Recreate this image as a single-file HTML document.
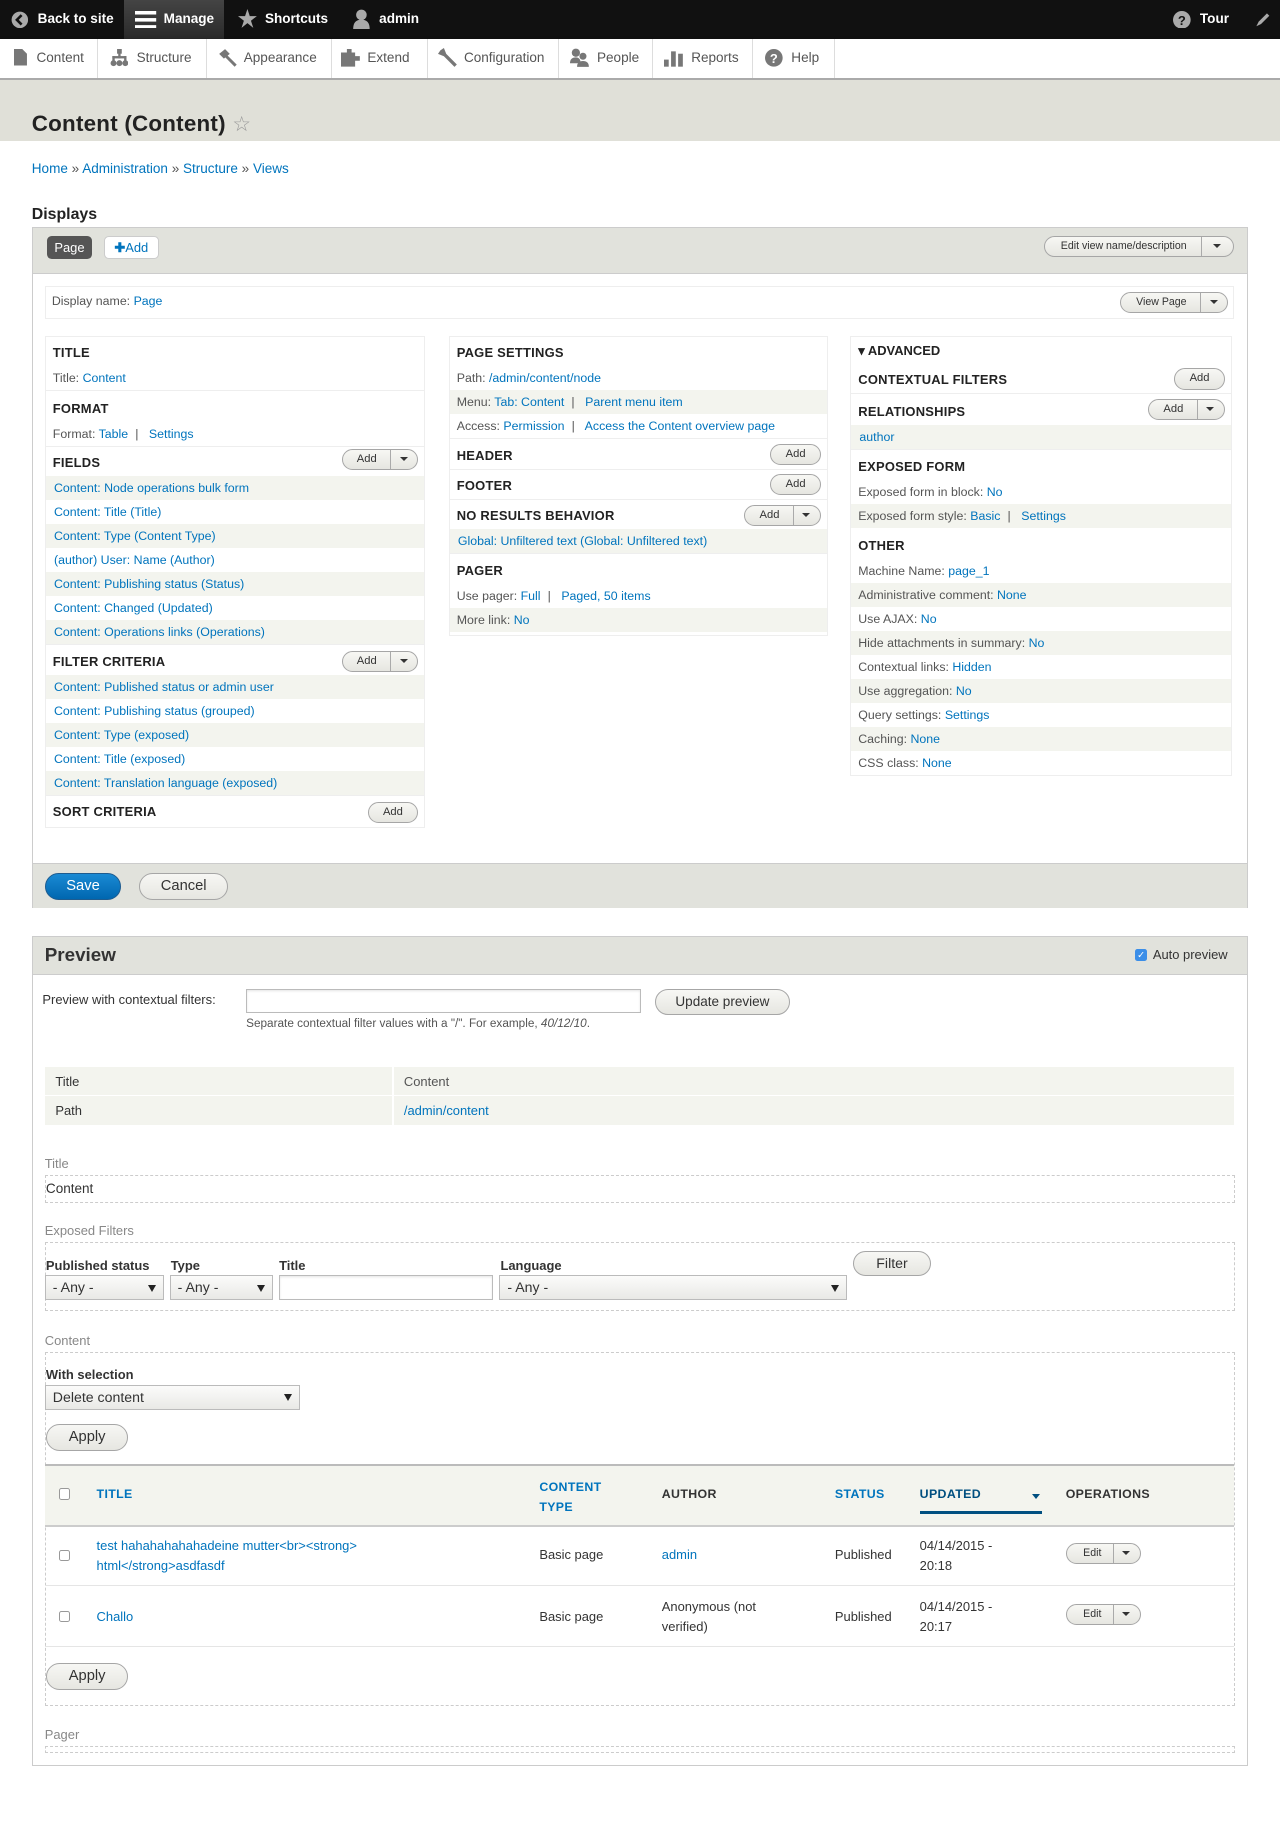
<!DOCTYPE html>
<html><head><meta charset="utf-8">
<style>
html,body{margin:0;padding:0;background:#fff;overflow:hidden}
body{width:1280px;height:1846px}
#w{zoom:1.17756;width:1087px;height:1568px;position:relative;font-family:"Liberation Sans",Arial,sans-serif;font-size:11px;color:#333}
.a{position:absolute}
a,.l{color:#0074bd;text-decoration:none}
.tb{left:0;top:0;width:1087px;height:33px;background:#111}
.tb span{position:absolute;top:0;line-height:32px;color:#fff;font-weight:bold;font-size:11.5px}
.tray{left:0;top:33px;width:1087px;height:33px;background:#fff;border-bottom:2px solid #aaa;box-shadow:0 1px 3px rgba(0,0,0,.3)}
.tray div{position:absolute;top:0;height:33px;line-height:32px;border-right:1px solid #ddd;color:#555;font-size:11.5px}
.btn{position:absolute;border:1px solid #a6a6a6;border-radius:12px;background:linear-gradient(#f7f7f4,#e6e6e1);color:#333;font-size:9.5px;text-align:center;box-sizing:border-box}
.col{position:absolute;border:1px solid #eee;background:#fff;box-sizing:border-box}
.sec{border-bottom:1px solid #eee;padding-top:3px;position:relative}
.sec:last-child{border-bottom:0}
.h{height:22px;line-height:22px;padding-left:6px;font-weight:bold;font-size:11px;color:#222;letter-spacing:.2px}
.r{height:20.4px;line-height:20.4px;padding-left:6px;color:#555;font-size:10.5px;white-space:nowrap}
.g{background:#f3f4ee}
.r.i{padding-left:7px}
.sep{color:#555;margin:0 6px}
.dash{position:absolute;border:1px dashed #ccc;border-right-style:dashed}
.sel{position:absolute;border:1px solid #bbb;background:linear-gradient(#fbfbfa,#e9e9e6);box-sizing:border-box;font-size:12px;line-height:19px;padding-left:6px;color:#333}
.sel:after{content:"";position:absolute;right:6px;top:7px;border:4px solid transparent;border-top:6px solid #222}
.inp{position:absolute;border:1px solid #bbb;background:#fff;box-sizing:border-box;box-shadow:inset 0 1px 2px rgba(0,0,0,.1)}
.cb{position:absolute;width:8px;height:8px;border:1px solid #999;border-radius:2px;background:#fff}
.th{position:absolute;font-weight:bold;font-size:10.5px;letter-spacing:.3px}
.dd{position:absolute;top:0;right:0;height:100%;border-left:1px solid #aaa}
.dd:after{content:"";position:absolute;left:50%;top:50%;margin:-2px 0 0 -4px;border:4px solid transparent;border-top:4px solid #333}
</style></head><body><div id="w">

<div class="a tb">
  <div class="a" style="left:105px;top:0;width:85px;height:33px;background:linear-gradient(#444,#2a2a2a)"></div>
  <svg class="a" style="left:9px;top:9px" width="15" height="15"><circle cx="7.5" cy="7.5" r="7" fill="#aaa"/><path d="M9 3.5 L5 7.5 L9 11.5" stroke="#111" stroke-width="2.2" fill="none"/></svg>
  <span style="left:32px">Back to site</span>
  <svg class="a" style="left:115px;top:9px" width="18" height="15"><rect y="0" width="18" height="3" fill="#fff"/><rect y="6" width="18" height="3" fill="#fff"/><rect y="12" width="18" height="3" fill="#fff"/></svg>
  <span style="left:139px">Manage</span>
  <svg class="a" style="left:202px;top:8px" width="16" height="16"><path d="M8 0 L10 6 L16 6 L11 10 L13 16 L8 12 L3 16 L5 10 L0 6 L6 6Z" fill="#aaa"/></svg>
  <span style="left:225px">Shortcuts</span>
  <svg class="a" style="left:299px;top:8px" width="16" height="17"><circle cx="8" cy="5" r="4.5" fill="#aaa"/><path d="M1 17 Q1 9 8 9 Q15 9 15 17Z" fill="#aaa"/></svg>
  <span style="left:322px">admin</span>
  <svg class="a" style="left:996px;top:9px" width="15" height="15"><circle cx="7.5" cy="7.5" r="7.5" fill="#aaa"/><text x="7.5" y="12" text-anchor="middle" font-size="11" font-weight="bold" fill="#111" font-family="Liberation Sans">?</text></svg>
  <span style="left:1019px">Tour</span>
  <svg class="a" style="left:1065px;top:9px" width="15" height="15"><path d="M2 13 L4 9 L11 2 L13 4 L6 11Z" fill="#aaa"/></svg>
</div>

<div class="a tray">
  <div style="left:0;width:82px"><svg class="a" style="left:12px;top:9px" width="11" height="14"><path d="M0 0 H7 L11 4 V14 H0Z" fill="#777"/></svg><span style="position:absolute;left:31px">Content</span></div>
  <div style="left:83px;width:92px"><svg class="a" style="left:10px;top:9px" width="16" height="15"><rect x="6" y="0" width="4" height="4" fill="#777"/><rect x="7" y="3" width="2" height="5" fill="#777"/><rect x="2" y="6" width="12" height="2" fill="#777"/><rect x="2" y="6" width="2" height="5" fill="#777"/><rect x="12" y="6" width="2" height="5" fill="#777"/><circle cx="3" cy="12" r="2.5" fill="#777"/><circle cx="8" cy="12" r="2.5" fill="#777"/><circle cx="13" cy="12" r="2.5" fill="#777"/></svg><span style="position:absolute;left:33px">Structure</span></div>
  <div style="left:176px;width:105px"><svg class="a" style="left:9px;top:8px" width="16" height="16"><path d="M1 5 L6 1 L10 5 L5 9Z" fill="#777"/><path d="M7 7 L15 15" stroke="#777" stroke-width="2.5"/></svg><span style="position:absolute;left:31px">Appearance</span></div>
  <div style="left:282px;width:81px"><svg class="a" style="left:8px;top:9px" width="17" height="15"><path d="M0 3 H5 V0 H9 V3 H12 V6 H16 V10 H12 V15 H0Z" fill="#777"/></svg><span style="position:absolute;left:30px">Extend</span></div>
  <div style="left:364px;width:110px"><svg class="a" style="left:8px;top:8px" width="16" height="17"><path d="M2 2 L5 0 L7 5 L16 14 L14 16 L5 7 L0 5Z" fill="#777"/></svg><span style="position:absolute;left:30px">Configuration</span></div>
  <div style="left:475px;width:79px"><svg class="a" style="left:9px;top:8px" width="16" height="16"><circle cx="5" cy="4" r="3.5" fill="#777"/><path d="M0 13 Q0 8 5 8 Q9 8 9 13Z" fill="#777"/><circle cx="11" cy="7" r="3" fill="#777"/><path d="M6 16 Q6 11 11 11 Q16 11 16 16Z" fill="#777"/></svg><span style="position:absolute;left:32px">People</span></div>
  <div style="left:555px;width:84px"><svg class="a" style="left:9px;top:9px" width="17" height="15"><rect x="0" y="9" width="4" height="6" fill="#777"/><rect x="6" y="2" width="4" height="13" fill="#777"/><rect x="12" y="4" width="4" height="11" fill="#777"/></svg><span style="position:absolute;left:32px">Reports</span></div>
  <div style="left:640px;width:68px"><svg class="a" style="left:10px;top:9px" width="15" height="15"><circle cx="7.5" cy="7.5" r="7.5" fill="#777"/><text x="7.5" y="12" text-anchor="middle" font-size="11" font-weight="bold" fill="#fff" font-family="Liberation Sans">?</text></svg><span style="position:absolute;left:32px">Help</span></div>
</div>

<div class="a" style="left:0;top:68px;width:1087px;height:52px;background:#e0e0d8"></div>
<div class="a" style="left:27px;top:94px;font-size:19px;font-weight:bold;color:#222;letter-spacing:.2px">Content (Content) <span style="font-weight:normal;color:#999;font-size:18px">☆</span></div>
<div class="a" style="left:27px;top:137px;font-size:11.5px;color:#555"><a>Home</a> » <a>Administration</a> » <a>Structure</a> » <a>Views</a></div>
<div class="a" style="left:27px;top:175px;font-size:13.5px;font-weight:bold;color:#222">Displays</div>

<div class="a" style="left:27px;top:193px;width:1033px;height:578px;border:1px solid #ccc;box-sizing:border-box;background:#fff"></div>
<div class="a" style="left:28px;top:194px;width:1031px;height:38px;background:#e1e2dc;border-bottom:1px solid #ccc"></div>
<div class="a" style="left:40px;top:200px;width:38px;height:20px;background:#555;border-radius:4px;color:#fff;font-size:11px;line-height:20px;text-align:center">Page</div>
<div class="a" style="left:88px;top:200px;width:47px;height:20px;background:#fff;border:1px solid #ccc;border-radius:4px;box-sizing:border-box;color:#0074bd;font-size:11px;line-height:18px;text-align:center"><b>✚</b>Add</div>
<div class="btn" style="left:887px;top:200px;width:161px;height:18px;line-height:16px;text-align:left;padding-left:13px;font-size:9px">Edit view name/description<div class="dd" style="width:26px"></div></div>

<div class="a" style="left:38px;top:243px;width:1010px;height:28px;border:1px solid #eee;box-sizing:border-box"></div>
<div class="a" style="left:44px;top:250px;font-size:10.5px;color:#555">Display name: <a>Page</a></div>
<div class="btn" style="left:951px;top:248px;width:92px;height:18px;line-height:16px;text-align:left;padding-left:13px;font-size:9px">View Page<div class="dd" style="width:22px"></div></div>

<div class="col" style="left:38px;top:285px;width:323px;height:418px">
 <div class="sec"><div class="h">TITLE</div><div class="r">Title: <a>Content</a></div></div>
 <div class="sec" style="padding-top:4px"><div class="h">FORMAT</div><div class="r">Format: <a>Table</a><span class="sep">|</span> <a>Settings</a></div></div>
 <div class="sec" style="padding-top:3px"><div class="h">FIELDS</div><div class="btn" style="right:5px;width:65px;height:18px;line-height:16px;position:absolute;top:2px;text-align:left;padding-left:12px">Add<div class="dd" style="width:22px"></div></div>
  <div class="r i g"><a>Content: Node operations bulk form</a></div><div class="r i"><a>Content: Title (Title)</a></div><div class="r i g"><a>Content: Type (Content Type)</a></div><div class="r i"><a>(author) User: Name (Author)</a></div><div class="r i g"><a>Content: Publishing status (Status)</a></div><div class="r i"><a>Content: Changed (Updated)</a></div><div class="r i g"><a>Content: Operations links (Operations)</a></div></div>
 <div class="sec" style="padding-top:3px"><div class="h">FILTER CRITERIA</div><div class="btn" style="right:5px;top:5px;width:65px;height:18px;line-height:16px;position:absolute;text-align:left;padding-left:12px">Add<div class="dd" style="width:22px"></div></div>
  <div class="r i g"><a>Content: Published status or admin user</a></div><div class="r i"><a>Content: Publishing status (grouped)</a></div><div class="r i g"><a>Content: Type (exposed)</a></div><div class="r i"><a>Content: Title (exposed)</a></div><div class="r i g"><a>Content: Translation language (exposed)</a></div></div>
 <div class="sec" style="padding-top:3px"><div class="h">SORT CRITERIA</div><div class="btn" style="right:5px;top:5px;width:43px;height:18px;line-height:16px;position:absolute">Add</div></div>
</div>

<div class="col" style="left:381px;top:285px;width:322px;height:255px">
 <div class="sec"><div class="h">PAGE SETTINGS</div><div class="r">Path: <a>/admin/content/node</a></div><div class="r g">Menu: <a>Tab: Content</a><span class="sep">|</span> <a>Parent menu item</a></div><div class="r">Access: <a>Permission</a><span class="sep">|</span> <a>Access the Content overview page</a></div></div>
 <div class="sec"><div class="h">HEADER</div><div class="btn" style="right:5px;top:4px;width:43px;height:18px;line-height:16px;position:absolute">Add</div></div>
 <div class="sec"><div class="h">FOOTER</div><div class="btn" style="right:5px;top:4px;width:43px;height:18px;line-height:16px;position:absolute">Add</div></div>
 <div class="sec"><div class="h">NO RESULTS BEHAVIOR</div><div class="btn" style="right:5px;top:4px;width:65px;height:18px;line-height:16px;position:absolute;text-align:left;padding-left:12px">Add<div class="dd" style="width:22px"></div></div><div class="r i g"><a>Global: Unfiltered text (Global: Unfiltered text)</a></div></div>
 <div class="sec"><div class="h">PAGER</div><div class="r">Use pager: <a>Full</a><span class="sep">|</span> <a>Paged, 50 items</a></div><div class="r g">More link: <a>No</a></div></div>
</div>

<div class="col" style="left:722px;top:285px;width:324px;height:374px">
 <div style="height:25px;line-height:24px;padding-left:6px;font-weight:bold;font-size:11px;color:#222">▾ ADVANCED</div>
 <div class="sec" style="padding-top:1px"><div class="h">CONTEXTUAL FILTERS</div><div class="btn" style="right:5px;top:2px;width:43px;height:18px;line-height:16px;position:absolute">Add</div></div>
 <div class="sec" style="padding-top:4px"><div class="h">RELATIONSHIPS</div><div class="btn" style="right:5px;top:4px;width:65px;height:18px;line-height:16px;position:absolute;text-align:left;padding-left:12px">Add<div class="dd" style="width:22px"></div></div><div class="r i g"><a>author</a></div></div>
 <div class="sec" style="border-bottom:0;padding-top:4px"><div class="h">EXPOSED FORM</div><div class="r">Exposed form in block: <a>No</a></div><div class="r g">Exposed form style: <a>Basic</a><span class="sep">|</span> <a>Settings</a></div></div>
 <div class="sec" style="padding-top:4px"><div class="h">OTHER</div><div class="r">Machine Name: <a>page_1</a></div><div class="r g">Administrative comment: <a>None</a></div><div class="r">Use AJAX: <a>No</a></div><div class="r g">Hide attachments in summary: <a>No</a></div><div class="r">Contextual links: <a>Hidden</a></div><div class="r g">Use aggregation: <a>No</a></div><div class="r">Query settings: <a>Settings</a></div><div class="r g">Caching: <a>None</a></div><div class="r">CSS class: <a>None</a></div></div>
</div>

<div class="a" style="left:28px;top:733px;width:1031px;height:37px;background:#e1e2dc;border-top:1px solid #ccc"></div>
<div class="a" style="left:38px;top:741px;width:65px;height:23px;background:linear-gradient(#1a8ad4,#0067b0);border:1px solid #1e5c90;border-radius:12px;box-sizing:border-box;color:#fff;font-size:12.5px;line-height:21px;text-align:center">Save</div>
<div class="btn" style="left:118px;top:741px;width:76px;height:23px;line-height:21px;font-size:12.5px">Cancel</div>

<div class="a" style="left:27px;top:795px;width:1033px;height:705px;border:1px solid #ccc;box-sizing:border-box"></div>
<div class="a" style="left:28px;top:796px;width:1031px;height:31px;background:#e1e2dc;border-bottom:1px solid #ccc"></div>
<div class="a" style="left:38px;top:802px;font-size:16px;font-weight:bold;color:#333">Preview</div>
<div class="a" style="left:964px;top:806px;width:10px;height:10px;background:#3b8ee8;border-radius:2px;color:#fff;font-size:8px;line-height:10px;text-align:center">✓</div>
<div class="a" style="left:979px;top:804px;font-size:11px;color:#333">Auto preview</div>

<div class="a" style="left:36px;top:842px;font-size:11px;color:#333">Preview with contextual filters:</div>
<div class="inp" style="left:209px;top:840px;width:335px;height:20px"></div>
<div class="btn" style="left:556px;top:840px;width:115px;height:22px;line-height:20px;font-size:11.5px">Update preview</div>
<div class="a" style="left:209px;top:864px;font-size:10px;color:#555">Separate contextual filter values with a "/". For example, <i>40/12/10</i>.</div>

<div class="a" style="left:38px;top:906px;width:1010px;height:24px;background:#f3f4ee"></div>
<div class="a" style="left:38px;top:931px;width:1010px;height:24px;background:#f3f4ee"></div>
<div class="a" style="left:333px;top:906px;width:2px;height:49px;background:#fff"></div>
<div class="a" style="left:47px;top:912px;font-size:11px;color:#333">Title</div>
<div class="a" style="left:343px;top:912px;font-size:11px;color:#555">Content</div>
<div class="a" style="left:47px;top:937px;font-size:11px;color:#333">Path</div>
<div class="a" style="left:343px;top:937px;font-size:11px"><a>/admin/content</a></div>

<div class="a" style="left:38px;top:982px;font-size:11px;color:#888">Title</div>
<div class="dash" style="left:38px;top:998px;width:1009px;height:22px"></div>
<div class="a" style="left:39px;top:1003px;font-size:11.5px;color:#333">Content</div>

<div class="a" style="left:38px;top:1039px;font-size:11px;color:#888">Exposed Filters</div>
<div class="dash" style="left:38px;top:1055px;width:1009px;height:57px"></div>
<div class="a" style="left:39px;top:1068px;font-size:11px;font-weight:bold;color:#333">Published status</div>
<div class="a" style="left:145px;top:1068px;font-size:11px;font-weight:bold;color:#333">Type</div>
<div class="a" style="left:237px;top:1068px;font-size:11px;font-weight:bold;color:#333">Title</div>
<div class="a" style="left:425px;top:1068px;font-size:11px;font-weight:bold;color:#333">Language</div>
<div class="sel" style="left:38px;top:1083px;width:101px;height:21px">- Any -</div>
<div class="sel" style="left:144px;top:1083px;width:88px;height:21px">- Any -</div>
<div class="inp" style="left:237px;top:1083px;width:182px;height:21px"></div>
<div class="sel" style="left:424px;top:1083px;width:295px;height:21px">- Any -</div>
<div class="btn" style="left:724px;top:1062px;width:67px;height:22px;line-height:20px;font-size:12px">Filter</div>

<div class="a" style="left:38px;top:1132px;font-size:11px;color:#888">Content</div>
<div class="dash" style="left:38px;top:1148px;width:1009px;height:299px"></div>
<div class="a" style="left:39px;top:1161px;font-size:11px;font-weight:bold;color:#333">With selection</div>
<div class="sel" style="left:38px;top:1176px;width:217px;height:21px">Delete content</div>
<div class="btn" style="left:39px;top:1209px;width:70px;height:23px;line-height:21px;font-size:12.5px">Apply</div>

<div class="a" style="left:38px;top:1243px;width:1010px;height:50px;background:#f3f4ee;border-top:2px solid #bbb;border-bottom:2px solid #ccc"></div>
<div class="cb" style="left:50px;top:1264px"></div>
<div class="th l" style="left:82px;top:1263px">TITLE</div>
<div class="th l" style="left:458px;top:1254px;line-height:17px">CONTENT<br>TYPE</div>
<div class="th" style="left:562px;top:1263px;color:#333">AUTHOR</div>
<div class="th l" style="left:709px;top:1263px">STATUS</div>
<div class="th" style="left:781px;top:1263px;color:#004f80">UPDATED</div>
<div class="a" style="left:781px;top:1283px;width:104px;height:3px;background:#004f80"></div>
<div class="a" style="left:876px;top:1269px;border:4px solid transparent;border-top:5px solid #004f80"></div>
<div class="th" style="left:905px;top:1263px;color:#333">OPERATIONS</div>

<div class="a" style="left:38px;top:1346px;width:1010px;height:1px;background:#e5e5e5"></div>
<div class="a" style="left:38px;top:1398px;width:1010px;height:1px;background:#e5e5e5"></div>
<div class="cb" style="left:50px;top:1316px"></div>
<div class="a" style="left:82px;top:1304px;font-size:11px;line-height:17px"><a>test hahahahahahadeine mutter&lt;br&gt;&lt;strong&gt;<br>html&lt;/strong&gt;asdfasdf</a></div>
<div class="a" style="left:458px;top:1314px;font-size:11px;color:#333">Basic page</div>
<div class="a" style="left:562px;top:1314px;font-size:11px"><a>admin</a></div>
<div class="a" style="left:709px;top:1314px;font-size:11px;color:#333">Published</div>
<div class="a" style="left:781px;top:1304px;font-size:11px;line-height:17px;color:#333">04/14/2015 -<br>20:18</div>
<div class="btn" style="left:905px;top:1310px;width:64px;height:18px;line-height:16px;text-align:left;padding-left:14px;font-size:9px">Edit<div class="dd" style="width:22px"></div></div>

<div class="cb" style="left:50px;top:1368px"></div>
<div class="a" style="left:82px;top:1366px;font-size:11px"><a>Challo</a></div>
<div class="a" style="left:458px;top:1366px;font-size:11px;color:#333">Basic page</div>
<div class="a" style="left:562px;top:1356px;font-size:11px;line-height:17px;color:#333">Anonymous (not<br>verified)</div>
<div class="a" style="left:709px;top:1366px;font-size:11px;color:#333">Published</div>
<div class="a" style="left:781px;top:1356px;font-size:11px;line-height:17px;color:#333">04/14/2015 -<br>20:17</div>
<div class="btn" style="left:905px;top:1362px;width:64px;height:18px;line-height:16px;text-align:left;padding-left:14px;font-size:9px">Edit<div class="dd" style="width:22px"></div></div>

<div class="btn" style="left:39px;top:1412px;width:70px;height:23px;line-height:21px;font-size:12.5px">Apply</div>

<div class="a" style="left:38px;top:1467px;font-size:11px;color:#888">Pager</div>
<div class="dash" style="left:38px;top:1483px;width:1009px;height:4px"></div>

</div></body></html>
